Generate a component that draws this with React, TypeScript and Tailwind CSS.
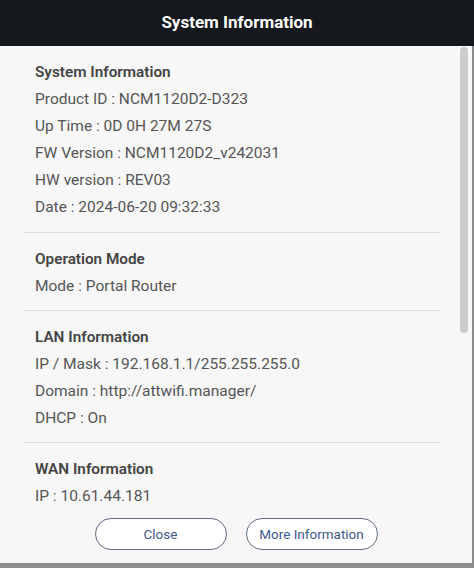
const sections = [
  {
    title: "System Information",
    rows: [
      "Product ID : NCM1120D2-D323",
      "Up Time : 0D 0H 27M 27S",
      "FW Version : NCM1120D2_v242031",
      "HW version : REV03",
      "Date : 2024-06-20 09:32:33",
    ],
  },
  { title: "Operation Mode", rows: ["Mode : Portal Router"] },
  {
    title: "LAN Information",
    rows: [
      "IP / Mask : 192.168.1.1/255.255.255.0",
      "Domain : http://attwifi.manager/",
      "DHCP : On",
    ],
  },
  { title: "WAN Information", rows: ["IP : 10.61.44.181"] },
];

export default function App() {
  return (
    <div className="w-[474px] h-[568px] flex flex-col font-['Roboto',sans-serif]">
      <header className="h-[46px] shrink-0 bg-[#15181d] flex items-center justify-center text-white text-[17px] font-bold">
        System Information
      </header>

      <div className="flex-1 flex flex-col bg-[#f7f7f7] border-r-2 border-b-[5px] border-[#8d8d8d]">
        <div className="flex flex-1">
          <div className="flex-1 pl-[24px] pr-[20px]">
            {sections.map((s, i) => (
              <section
                key={s.title}
                className={
                  i < sections.length - 1
                    ? "px-[11px] pt-[13px] pb-[10px] border-b border-[#dcdcdc]"
                    : "px-[11px] pt-[13px]"
                }
              >
                <h3 className="text-[15.3px] leading-[27.1px] font-semibold text-[#444]">{s.title}</h3>
                {s.rows.map((r) => (
                  <p key={r} className="text-[15.5px] leading-[27.1px] text-[#555]">
                    {r}
                  </p>
                ))}
              </section>
            ))}
          </div>
          <div className="w-[12px] pt-[1px]">
            <div className="w-[8px] h-[286px] rounded-full bg-[#cdcdcd]" />
          </div>
        </div>

        <footer className="flex justify-center gap-[19px] pb-[13px]">
          <button className="w-[132px] h-[32px] rounded-full border border-[#5e6b80] bg-white text-[13.5px] text-[#3e5a8c]">
            Close
          </button>
          <button className="w-[132px] h-[32px] rounded-full border border-[#5e6b80] bg-white text-[13.5px] text-[#3e5a8c]">
            More Information
          </button>
        </footer>
      </div>
    </div>
  );
}
